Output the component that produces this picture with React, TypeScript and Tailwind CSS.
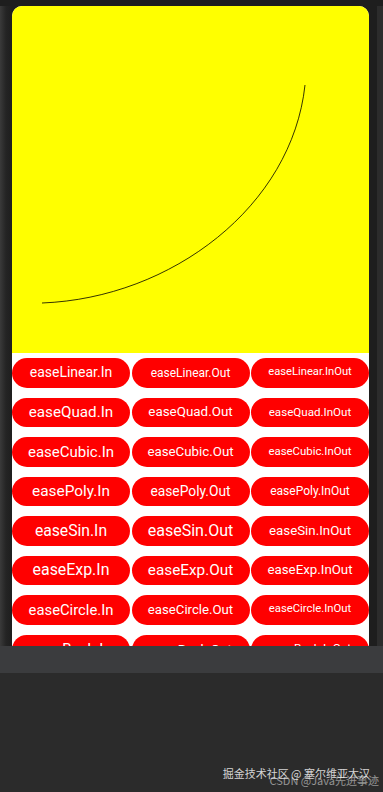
const rows: { label: string; size: string }[][] = [
  [
    { label: "easeLinear.In", size: "text-[14px]" },
    { label: "easeLinear.Out", size: "text-[12px]" },
    { label: "easeLinear.InOut", size: "text-[11.2px]" },
  ],
  [
    { label: "easeQuad.In", size: "text-[15.2px]" },
    { label: "easeQuad.Out", size: "text-[13.4px]" },
    { label: "easeQuad.InOut", size: "text-[11.6px]" },
  ],
  [
    { label: "easeCubic.In", size: "text-[15px]" },
    { label: "easeCubic.Out", size: "text-[13.3px]" },
    { label: "easeCubic.InOut", size: "text-[11.4px]" },
  ],
  [
    { label: "easePoly.In", size: "text-[15.4px]" },
    { label: "easePoly.Out", size: "text-[13.8px]" },
    { label: "easePoly.InOut", size: "text-[12px]" },
  ],
  [
    { label: "easeSin.In", size: "text-[15.7px]" },
    { label: "easeSin.Out", size: "text-[16px]" },
    { label: "easeSin.InOut", size: "text-[13.3px]" },
  ],
  [
    { label: "easeExp.In", size: "text-[15.9px]" },
    { label: "easeExp.Out", size: "text-[15.3px]" },
    { label: "easeExp.InOut", size: "text-[13.3px]" },
  ],
  [
    { label: "easeCircle.In", size: "text-[14.8px]" },
    { label: "easeCircle.Out", size: "text-[13.2px]" },
    { label: "easeCircle.InOut", size: "text-[11.3px]" },
  ],
  [
    { label: "easeBack.In", size: "text-[15px]" },
    { label: "easeBack.Out", size: "text-[13.5px]" },
    { label: "easeBack.InOut", size: "text-[11.8px]" },
  ],
];

export default function App() {
  return (
    <div className="w-[383px] h-[792px] bg-[#2b2b2b] flex flex-col overflow-hidden font-['Roboto',sans-serif]">
      {/* device frame */}
      <div className="h-[646px] shrink-0 flex bg-[#1e1e1e] pt-[6px]">
        <div className="w-[12px] bg-gradient-to-r from-[#3a3a3a] via-[#242424] to-[#1e1e1e]" />
        <div className="w-[357px] rounded-t-[10px] overflow-hidden bg-white flex flex-col">
          <div className="h-[347px] shrink-0 bg-[#ffff00]">
            <svg width="357" height="347" viewBox="0 0 357 347">
              <path d="M30 297 C 160 292, 280 200, 293 79" fill="none" stroke="#000" strokeWidth="0.8" />
            </svg>
          </div>
          <div className="grid grid-cols-3 gap-x-[1.5px] gap-y-[10px] pt-[5px]">
            {rows.flat().map((b) => (
              <button
                key={b.label}
                className={`h-[29.5px] rounded-full bg-[#ff0000] text-white flex items-center justify-center ${b.size}`}
              >
                {b.label}
              </button>
            ))}
          </div>
        </div>
        <div className="w-[14px] flex">
          <div className="w-[8px] bg-[#1e1e1e]" />
          <div className="flex-1 bg-[#2c2c2c]" />
        </div>
      </div>

      {/* bottom bar */}
      <div className="h-[27px] shrink-0 bg-[#3b3c3e]" />

      <div className="flex-1 relative flex flex-col justify-end items-end pb-[13px] pr-[13px]">
        <span className="text-[11px] text-[#d4d4d4] font-['Noto_Sans_CJK_SC',sans-serif] leading-none">
          掘金技术社区 @ 塞尔维亚大汉
        </span>
        <span className="absolute right-[4px] bottom-[6px] text-[11px] text-white/50 font-['Noto_Sans_CJK_SC',sans-serif] leading-none">
          CSDN @Java先进事迹
        </span>
      </div>
    </div>
  );
}
